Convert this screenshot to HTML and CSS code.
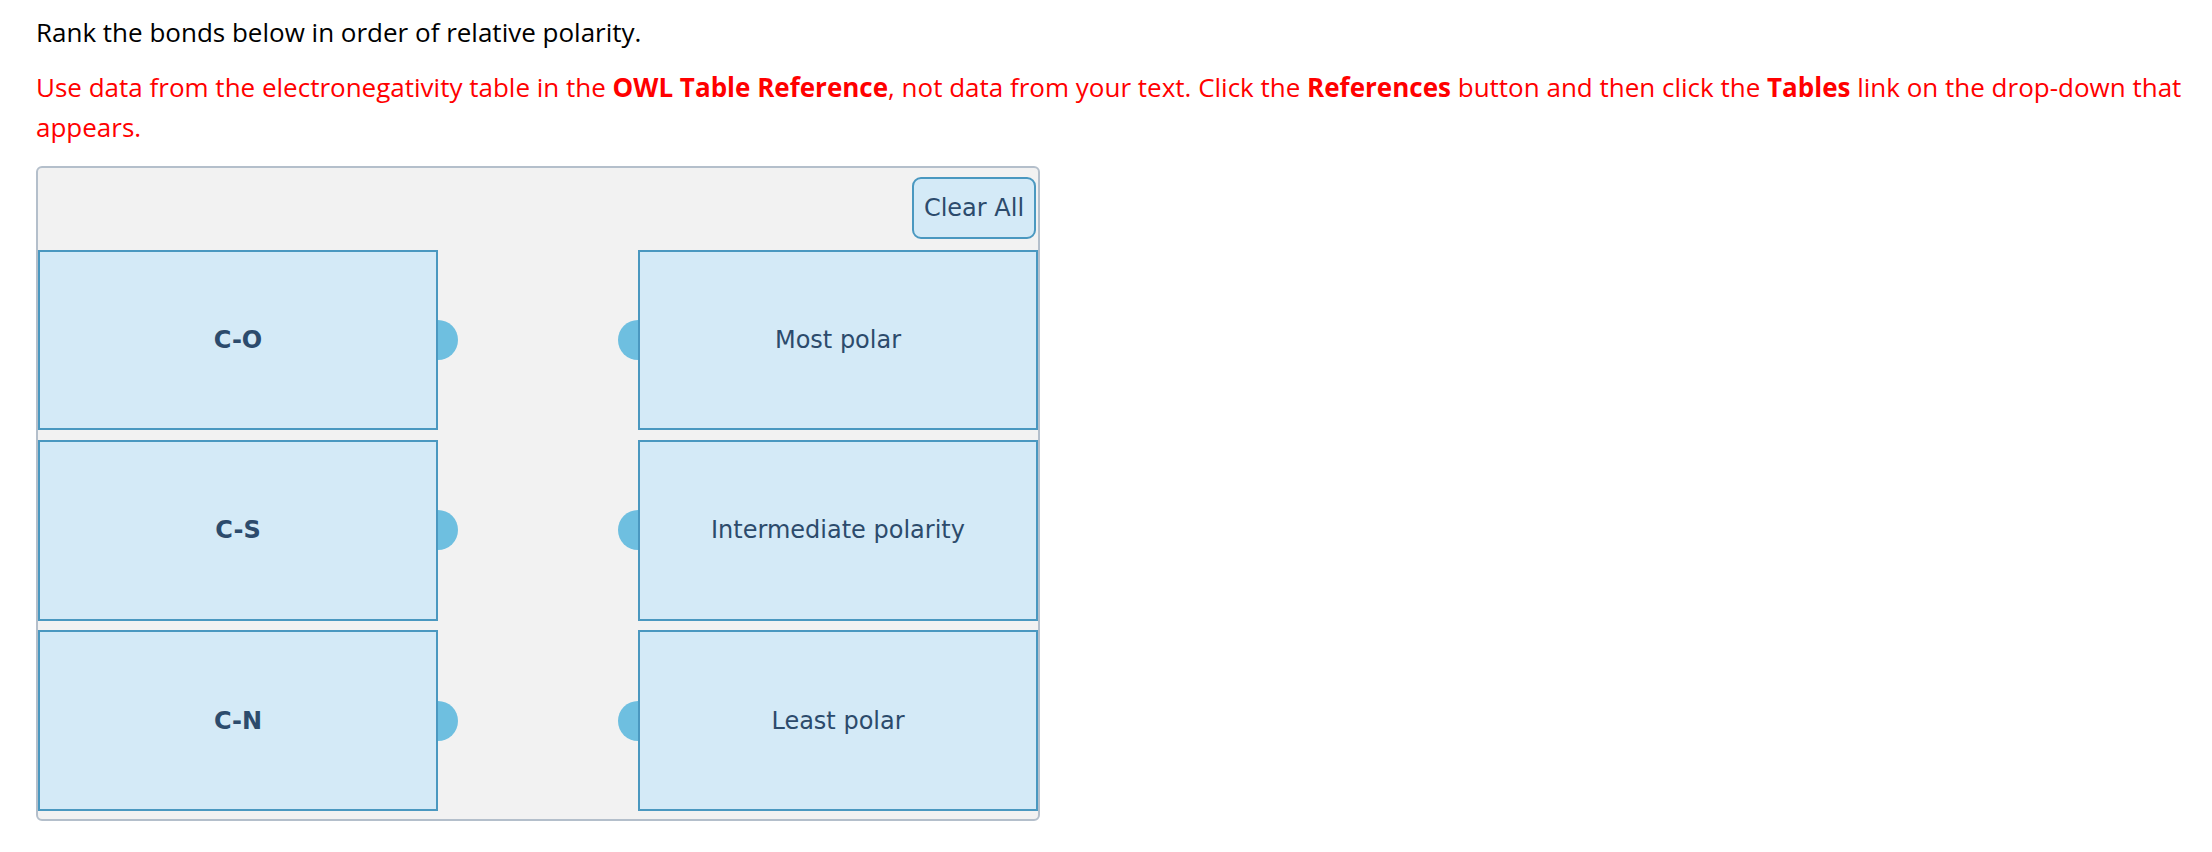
FILE: index.html
```html
<!DOCTYPE html>
<html lang="en">
<head>
<meta charset="utf-8">
<title>Rank the bonds</title>
<link rel="stylesheet" href="styles.css">
</head>
<body>
<div class="page">
  <p class="prompt">Rank the bonds below in order of relative polarity.</p>
  <p class="note">Use data from the electronegativity table in the <b>OWL Table Reference</b>, not data from your text. Click the <b>References</b> button and then click the <b>Tables</b> link on the drop-down that appears.</p>
  <div class="ranker">
    <div class="toolbar"><button class="clear-btn" type="button">Clear All</button></div>
    <div class="board">
      <div class="column">
        <div class="card item">C-O</div>
        <div class="card item">C-S</div>
        <div class="card item">C-N</div>
      </div>
      <div class="column">
        <div class="card target">Most polar</div>
        <div class="card target">Intermediate polarity</div>
        <div class="card target">Least polar</div>
      </div>
    </div>
  </div>
</div>
</body>
</html>
```
FILE: styles.css
```css
html, body {
  margin: 0;
  background: #ffffff;
}

.page {
  padding: 12.7px 8px 0 36px;
  font-family: "Open Sans", "Liberation Sans", sans-serif;
  font-size: 26px;
  line-height: 39.4px;
  color: #000000;
}

.prompt {
  margin: 0 0 16.4px 0;
}

.note {
  margin: 0 0 18.5px 0;
  color: #ff0000;
}

.note b {
  font-weight: 700;
}

.ranker {
  position: relative;
  z-index: 0;
  width: 1000px;
  border: 2px solid #b4bfcb;
  border-radius: 6px;
  background: #f2f2f2;
  padding: 9px 0 8px 0;
  font-family: "DejaVu Sans", Verdana, sans-serif;
  line-height: normal;
}

.toolbar {
  display: flex;
  justify-content: flex-end;
  padding-right: 2px;
  margin-bottom: 11px;
}

.clear-btn {
  box-sizing: border-box;
  width: 124px;
  height: 62px;
  padding: 0;
  border: 2px solid #4a98c0;
  border-radius: 9px;
  background: #d4eaf7;
  color: #2c4b6c;
  font-family: "DejaVu Sans", Verdana, sans-serif;
  font-size: 24px;
  cursor: pointer;
}

.board {
  display: flex;
  justify-content: space-between;
}

.column {
  display: flex;
  flex-direction: column;
  gap: 9.8px;
}

.card {
  position: relative;
  box-sizing: border-box;
  width: 400px;
  height: 180.5px;
  border: 2px solid #4a98c0;
  background: #d4eaf7;
  color: #2c4b6c;
  font-size: 24px;
  display: flex;
  align-items: center;
  justify-content: center;
}

.item {
  font-weight: 700;
}

.item::after,
.target::before {
  content: "";
  position: absolute;
  top: 50%;
  width: 40px;
  height: 40px;
  margin-top: -20px;
  border-radius: 50%;
  background: #6ebfe0;
  z-index: -1;
}

.item::after {
  right: -22px;
}

.target::before {
  left: -22px;
}
```
